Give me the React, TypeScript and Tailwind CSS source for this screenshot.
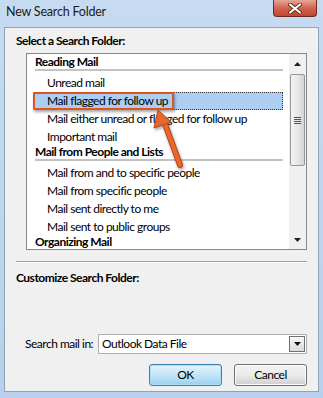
const font = "[font-family:Lato,ui-sans-serif,sans-serif] tracking-[-0.5px]";

type Row = { label: string; heading?: boolean; selected?: boolean };

const rows: Row[] = [
  { label: "Reading Mail", heading: true },
  { label: "Unread mail" },
  { label: "Mail flagged for follow up", selected: true },
  { label: "Mail either unread or flagged for follow up" },
  { label: "Important mail" },
  { label: "Mail from People and Lists", heading: true },
  { label: "Mail from and to specific people" },
  { label: "Mail from specific people" },
  { label: "Mail sent directly to me" },
  { label: "Mail sent to public groups" },
  { label: "Organizing Mail", heading: true },
];

function ListRow({ row }: { row: Row }) {
  if (row.heading) {
    return (
      <div className="h-[18px] shrink-0 pl-[8px] pr-[6px]">
        <div className="h-[12px] whitespace-nowrap text-[12px] font-bold leading-[12px] text-black">{row.label}</div>
        <div className="mt-[1px] h-[2px] bg-[#c3c3c3]" />
      </div>
    );
  }
  if (row.selected) {
    return (
      <div className="ml-[7px] mr-[6px] flex h-[18px] shrink-0 items-center whitespace-nowrap border border-dotted border-[#333] bg-[#abcef2] pl-[12px] text-[12px] text-black">
        {row.label}
      </div>
    );
  }
  return (
    <div className="flex h-[18px] shrink-0 items-center whitespace-nowrap pl-[20px] text-[12px] text-black">{row.label}</div>
  );
}

function Scrollbar() {
  return (
    <div className="flex w-[17px] shrink-0 flex-col items-center bg-[#f0f0f0]">
      <div className="flex h-[20px] w-full items-center justify-center">
        <svg width="7" height="4" viewBox="0 0 7 4">
          <polygon points="0,4 7,4 3.5,0" fill="#222" />
        </svg>
      </div>
      <div className="flex h-[92px] w-[15px] items-center justify-center rounded-[2px] border border-[#979797] bg-gradient-to-r from-[#f3f3f3] via-[#e8e8e8] to-[#d4d4d4]">
        <div className="flex flex-col gap-[1px]">
          <div className="h-[1px] w-[7px] bg-[#555]" />
          <div className="h-[1px] w-[7px] bg-[#555]" />
          <div className="h-[1px] w-[7px] bg-[#555]" />
          <div className="h-[1px] w-[7px] bg-[#555]" />
        </div>
      </div>
      <div className="flex-1" />
      <div className="flex h-[18px] w-full items-center justify-center">
        <svg width="7" height="4" viewBox="0 0 7 4">
          <polygon points="0,0 7,0 3.5,4" fill="#222" />
        </svg>
      </div>
    </div>
  );
}

export default function App() {
  return (
    <div className={`relative flex h-[398px] w-[323px] flex-col bg-gradient-to-b from-[#c6dbf1] to-[#b7d0eb] ${font}`}>
      {/* Title bar */}
      <div className="flex h-[27px] shrink-0 items-start justify-between">
        <div className="pl-[6px] pt-[3px] text-[12.5px] leading-[18px] tracking-[-0.2px] text-[#1b1b1b]">New Search Folder</div>
        <div className="mr-[6px] flex h-[17px] w-[44px] items-center justify-center rounded-b-[4px] border border-t-0 border-[#6e2a20] bg-gradient-to-b from-[#e6a597] via-[#d0654f] to-[#c24630]">
          <svg width="14" height="11" viewBox="0 0 14 11">
            <path d="M2 1.5 L12 9.5 M12 1.5 L2 9.5" stroke="#5a2a22" strokeWidth="4" strokeLinecap="round" />
            <path d="M2 1.5 L12 9.5 M12 1.5 L2 9.5" stroke="#fff" strokeWidth="2.2" strokeLinecap="round" />
          </svg>
        </div>
      </div>

      {/* Client area */}
      <div className="mx-[4px] mb-[6px] flex flex-1 flex-col border border-[#8fa3bb] bg-[#f0f0f0] pl-[11px] pr-[11px]">
        <div className="mt-[5px] h-[16px] text-[12px] font-bold leading-[16px] text-black">Select a Search Folder:</div>

        <div className="ml-[10px] mt-[4px] flex h-[197px] shrink-0 overflow-hidden border border-[#828790] bg-white">
          <div className="flex min-w-0 flex-1 flex-col overflow-hidden pt-[2px]">
            {rows.map((r) => (
              <ListRow key={r.label} row={r} />
            ))}
          </div>
          <Scrollbar />
        </div>

        <div className="mt-[11px] border-t border-[#a0a0a0] border-b border-b-white" />

        <div className="mt-[7px] h-[16px] text-[12px] font-bold leading-[16px] text-black">Customize Search Folder:</div>

        <div className="flex-1" />

        <div className="flex items-center">
          <div className="w-[82px] whitespace-nowrap pl-[9px] text-[12px] text-black">Search mail in:</div>
          <div className="flex h-[20px] flex-1 items-center border border-[#abadb3] bg-white pl-[3px] pr-[1px]">
            <span className="flex-1 text-[12px] text-black">Outlook Data File</span>
            <div className="flex h-[16px] w-[16px] items-center justify-center border border-[#707070] bg-gradient-to-b from-[#f6f6f6] to-[#dcdcdc]">
              <svg width="7" height="4" viewBox="0 0 7 4">
                <polygon points="0,0 7,0 3.5,4" fill="#111" />
              </svg>
            </div>
          </div>
        </div>

        <div className="mb-[5px] mt-[10px] flex justify-end gap-[12px]">
          <button className="h-[22px] w-[73px] rounded-[3px] border border-[#3c7fb1] bg-gradient-to-b from-[#e5f4fc] via-[#c4e5f6] to-[#98d1ef] text-[12px] text-black shadow-[inset_0_0_0_1px_#a8e2fa]">
            OK
          </button>
          <button className="h-[22px] w-[73px] rounded-[3px] border border-[#707070] bg-gradient-to-b from-[#f2f2f2] via-[#ebebeb] to-[#cfcfcf] text-[12px] text-black shadow-[inset_0_0_0_1px_#fcfcfc]">
            Cancel
          </button>
        </div>
      </div>

      {/* Orange annotation box */}
      <div className="pointer-events-none absolute left-[33px] top-[92px] h-[18px] w-[141px] rounded-[1px] border-2 border-[#e0531f] shadow-[1px_2px_3px_rgba(0,0,0,0.35)]" />

      {/* Annotation arrow */}
      <svg className="pointer-events-none absolute left-0 top-0" width="323" height="398" viewBox="0 0 323 398">
        <g style={{ filter: "drop-shadow(1px 2px 1.5px rgba(0,0,0,0.35))" }}>
          <path d="M180 165 L165 124" stroke="#b9451a" strokeWidth="6" strokeLinecap="round" />
          <path d="M180 165 L165 124" stroke="#e8682c" strokeWidth="4" strokeLinecap="round" />
          <polygon points="158,110 154,128 171,122" fill="#e8682c" stroke="#b9451a" strokeWidth="1" strokeLinejoin="round" />
        </g>
      </svg>
    </div>
  );
}
